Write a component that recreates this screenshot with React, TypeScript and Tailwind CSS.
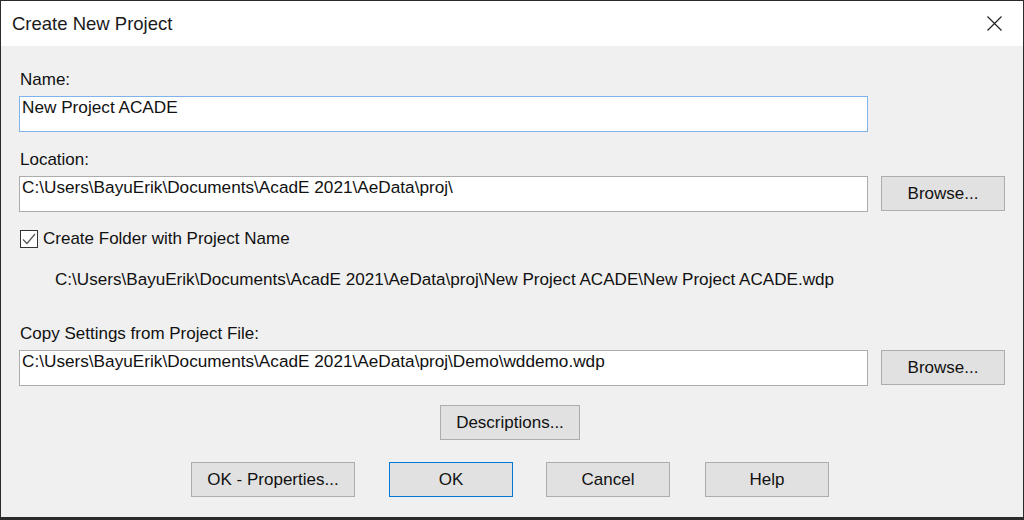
import React from 'react'

const font = { fontFamily: '"Liberation Sans", Arial, sans-serif' }

function Button({ label, width, primary, extra = '' }: { label: string; width: string; primary?: boolean; extra?: string }) {
  return (
    <button
      className={`${width} ${extra} h-[35px] bg-[#e1e1e1] border text-[17px] text-[#111] leading-none ${
        primary ? 'border-[#0078d7]' : 'border-[#adadad]'
      }`}
    >
      {label}
    </button>
  )
}

function TextBox({ value, focused }: { value: string; focused?: boolean }) {
  return (
    <div
      className={`w-[849px] h-[36px] bg-white border pl-[2px] text-[17.2px] leading-[21px] text-[#111] whitespace-nowrap ${
        focused ? 'border-[#7eb4ea]' : 'border-[#acacac]'
      }`}
    >
      {value}
    </div>
  )
}

export default function App() {
  return (
    <div style={font} className="w-[1024px] h-[520px] bg-[#f0f0f0] border border-b-[3px] border-[#2b2b2b] flex flex-col text-[#111]">
      {/* Title bar */}
      <div className="h-[45px] bg-white flex items-center justify-between pl-[11px] pr-[21px] shrink-0">
        <span className="text-[18.5px] text-[#1a1a1a]">Create New Project</span>
        <svg width="15" height="15" viewBox="0 0 15 15">
          <path d="M0.5 0.5 L14.5 14.5 M14.5 0.5 L0.5 14.5" stroke="#222" strokeWidth="1.2" />
        </svg>
      </div>

      <div className="pl-[18px] flex flex-col">
        <div className="mt-[24px] text-[17px] leading-[20px] pl-[1px]">Name:</div>
        <div className="mt-[6px]">
          <TextBox value="New Project ACADE" focused />
        </div>

        <div className="mt-[18px] text-[17px] leading-[20px] pl-[1px]">Location:</div>
        <div className="mt-[6px] flex items-start gap-[13px]">
          <TextBox value="C:\Users\BayuErik\Documents\AcadE 2021\AeData\proj\" />
          <Button label="Browse..." width="w-[124px]" />
        </div>

        <div className="mt-[17px] flex items-center gap-[5px] pl-[1px]">
          <div className="w-[18px] h-[18px] border border-[#333] bg-white flex items-center justify-center">
            <svg width="14" height="12" viewBox="0 0 14 12">
              <path d="M1 6.5 L5 10.5 L13 1" fill="none" stroke="#555" strokeWidth="1.2" />
            </svg>
          </div>
          <span className="text-[17px] leading-[20px]">Create Folder with Project Name</span>
        </div>

        <div className="mt-[21px] pl-[36px] text-[17.1px] leading-[20px] whitespace-nowrap">
          C:\Users\BayuErik\Documents\AcadE 2021\AeData\proj\New Project ACADE\New Project ACADE.wdp
        </div>

        <div className="mt-[34px] text-[17px] leading-[20px] pl-[1px]">Copy Settings from Project File:</div>
        <div className="mt-[6px] flex items-start gap-[13px]">
          <TextBox value="C:\Users\BayuErik\Documents\AcadE 2021\AeData\proj\Demo\wddemo.wdp" />
          <Button label="Browse..." width="w-[124px]" />
        </div>
      </div>

      <div className="mt-[19px] flex justify-center pr-[4px]">
        <Button label="Descriptions..." width="w-[140px]" />
      </div>

      <div className="mt-[22px] flex pl-[190px]">
        <Button label="OK - Properties..." width="w-[164px]" extra="mr-[34px]" />
        <Button label="OK" width="w-[124px]" primary extra="mr-[33px]" />
        <Button label="Cancel" width="w-[124px]" extra="mr-[35px]" />
        <Button label="Help" width="w-[124px]" />
      </div>
    </div>
  )
}
